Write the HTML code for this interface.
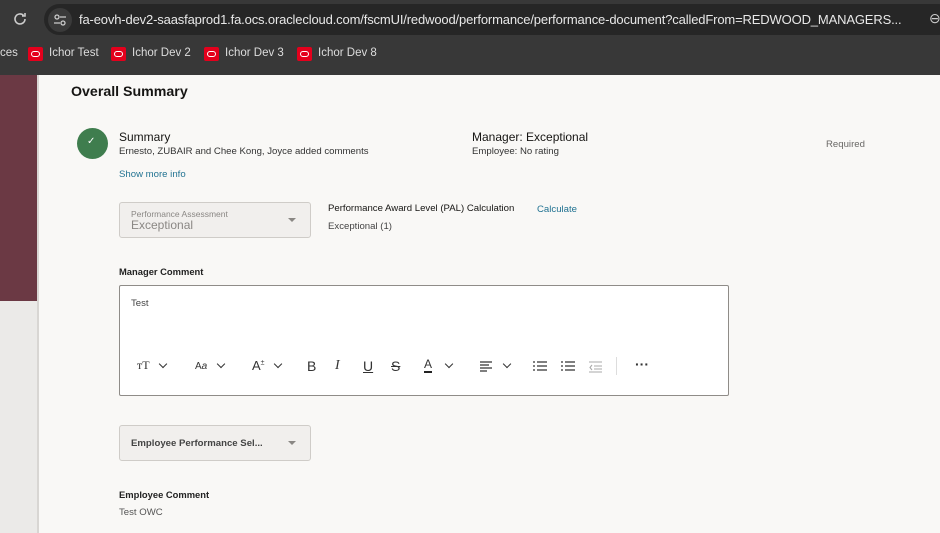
<!DOCTYPE html>
<html><head><meta charset="utf-8"><style>
*{margin:0;padding:0;box-sizing:border-box}
body{width:940px;height:533px;overflow:hidden;background:#f9f8f6;font-family:"Liberation Sans",sans-serif;position:relative;color:#161513}
.top{position:absolute;left:0;top:0;width:940px;height:75px;background:#383838}
.url{position:absolute;left:44px;top:4px;width:910px;height:31px;border-radius:16px;background:#262626}
.urltxt{position:absolute;left:79px;top:12px;font-size:13px;color:#e8e8e8;white-space:nowrap;letter-spacing:-0.15px}
.bm{position:absolute;top:47px;font-size:11.5px;color:#ddd;white-space:nowrap}
.ico{position:absolute;top:47px;width:15px;height:14px;background:#e4001c;border-radius:2px}
.ico:after{content:"";position:absolute;left:3px;top:4px;width:9px;height:6px;border:1.5px solid #fff;border-radius:4px;box-sizing:border-box}
.left1{position:absolute;left:0;top:75px;width:37px;height:226px;background:#6b3944}
.left2{position:absolute;left:0;top:301px;width:37px;height:232px;background:#ebeae8}
.sh{position:absolute;left:37px;top:75px;width:2px;height:458px;background:#d8d6d3}
.t{position:absolute;white-space:nowrap}
.box{position:absolute;border:1px solid #cfccc8;border-radius:3px;background:#f1efed}
.caret{position:absolute;width:0;height:0;border-left:4px solid transparent;border-right:4px solid transparent;border-top:4px solid #8a8784}
.tb{position:absolute;top:358px;font-size:14px;color:#333}
.chev{position:absolute;top:361px;width:6px;height:6px;border-right:1.5px solid #333;border-bottom:1.5px solid #333;transform:rotate(45deg)}
</style></head><body>
<div class="top"></div>
<div class="url"></div>
<svg style="position:absolute;left:12px;top:11px" width="16" height="16" viewBox="0 0 16 16"><path d="M13 8a5 5 0 1 1-1.5-3.6M13 2v3h-3" fill="none" stroke="#ccc" stroke-width="1.6"/></svg>
<div style="position:absolute;left:48px;top:8px;width:24px;height:24px;border-radius:12px;background:#3a3a3a"></div>
<svg style="position:absolute;left:53px;top:13px" width="14" height="14" viewBox="0 0 14 14"><circle cx="4" cy="4" r="2" fill="none" stroke="#ccc" stroke-width="1.3"/><path d="M7 4h6M1 10h6" stroke="#ccc" stroke-width="1.3"/><circle cx="10" cy="10" r="2" fill="none" stroke="#ccc" stroke-width="1.3"/></svg>
<div class="urltxt">fa-eovh-dev2-saasfaprod1.fa.ocs.oraclecloud.com/fscmUI/redwood/performance/performance-document?calledFrom=REDWOOD_MANAGERS...</div>
<div class="t" style="left:929px;top:10px;color:#ccc;font-size:14px;background:#262626">⊖</div>
<div class="bm" style="left:0">ces</div>
<div class="ico" style="left:28px"></div><div class="bm" style="left:49px">Ichor Test</div>
<div class="ico" style="left:111px"></div><div class="bm" style="left:132px">Ichor Dev 2</div>
<div class="ico" style="left:204px"></div><div class="bm" style="left:225px">Ichor Dev 3</div>
<div class="ico" style="left:297px"></div><div class="bm" style="left:318px">Ichor Dev 8</div>
<div class="left1"></div><div class="left2"></div><div class="sh"></div>
<div class="t" style="left:71px;top:84px;font-size:14.2px;font-weight:bold">Overall Summary</div>
<div style="position:absolute;left:77px;top:128px;width:31px;height:31px;border-radius:50%;background:#3f7d4e"></div>
<div class="t" style="left:87px;top:136px;color:#fff;font-size:10px">✓</div>
<div class="t" style="left:119px;top:130px;font-size:12px">Summary</div>
<div class="t" style="left:119px;top:146px;font-size:9.6px;color:#333">Ernesto, ZUBAIR and Chee Kong, Joyce added comments</div>
<div class="t" style="left:119px;top:169px;font-size:9.6px;color:#227392">Show more info</div>
<div class="t" style="left:472px;top:130px;font-size:12px">Manager: Exceptional</div>
<div class="t" style="left:472px;top:146px;font-size:9.6px;color:#333">Employee: No rating</div>
<div class="t" style="left:826px;top:139px;font-size:9.6px;color:#6a6866">Required</div>
<div class="box" style="left:119px;top:202px;width:192px;height:36px"></div>
<div class="t" style="left:131px;top:209px;font-size:8.5px;color:#8a8784">Performance Assessment</div>
<div class="t" style="left:131px;top:218px;font-size:12px;color:#8a8784">Exceptional</div>
<div class="caret" style="left:288px;top:218px"></div>
<div class="t" style="left:328px;top:203px;font-size:9.6px">Performance Award Level (PAL) Calculation</div>
<div class="t" style="left:537px;top:204px;font-size:9.6px;color:#227392">Calculate</div>
<div class="t" style="left:328px;top:221px;font-size:9.6px;color:#444">Exceptional (1)</div>
<div class="t" style="left:119px;top:266px;font-size:9.4px;font-weight:bold;color:#222">Manager Comment</div>
<div style="position:absolute;left:119px;top:285px;width:610px;height:111px;border:1px solid #8f8c88;background:#fff;border-radius:2px"></div>
<div class="t" style="left:131px;top:298px;font-size:9.6px;color:#444">Test</div>
<div class="tb" style="left:137px;font-size:12px;font-family:'Liberation Serif',serif">ᴛT</div><div class="chev" style="left:160px"></div>
<div class="tb" style="left:195px;font-size:10px;top:361px">A<i>a</i></div><div class="chev" style="left:218px"></div>
<div class="tb" style="left:252px;font-size:13px">A<sup style="font-size:7px">±</sup></div><div class="chev" style="left:275px"></div>
<div class="tb" style="left:307px">B</div>
<div class="tb" style="left:335px;font-style:italic;font-family:'Liberation Serif',serif">I</div>
<div class="tb" style="left:363px;text-decoration:underline">U</div>
<div class="tb" style="left:391px;text-decoration:line-through">S</div>
<div class="tb" style="left:424px;font-size:12px;border-bottom:2px solid #222;line-height:13px">A</div><div class="chev" style="left:446px"></div>
<svg style="position:absolute;left:480px;top:361px" width="14" height="12"><path d="M0 1h12M0 4h9M0 7h12M0 10h7" stroke="#333" stroke-width="1.2"/></svg><div class="chev" style="left:504px"></div>
<svg style="position:absolute;left:533px;top:361px" width="14" height="12"><path d="M0 1h2M4 1h10M0 5h2M4 5h10M0 9h2M4 9h10" stroke="#333" stroke-width="1.2"/></svg>
<svg style="position:absolute;left:561px;top:361px" width="14" height="12"><path d="M0 1h2M4 1h10M0 5h2M4 5h10M0 9h2M4 9h10" stroke="#333" stroke-width="1.2"/></svg>
<svg style="position:absolute;left:589px;top:361px" width="14" height="12"><path d="M0 1h13M5 5h8M5 8h8M0 11h13M3 4l-2 2.5 2 2.5" stroke="#aaa" stroke-width="1.1" fill="none"/></svg>
<div style="position:absolute;left:616px;top:357px;width:1px;height:18px;background:#ddd"></div>
<div class="tb" style="left:635px;top:356px;font-weight:bold">···</div>
<div class="box" style="left:119px;top:425px;width:192px;height:36px"></div>
<div class="t" style="left:131px;top:438px;font-size:9.6px;color:#444;font-weight:bold">Employee Performance Sel...</div>
<div class="caret" style="left:288px;top:441px"></div>
<div class="t" style="left:119px;top:489px;font-size:9.4px;font-weight:bold;color:#222">Employee Comment</div>
<div class="t" style="left:119px;top:507px;font-size:9.6px;color:#555">Test OWC</div>
</body></html>
